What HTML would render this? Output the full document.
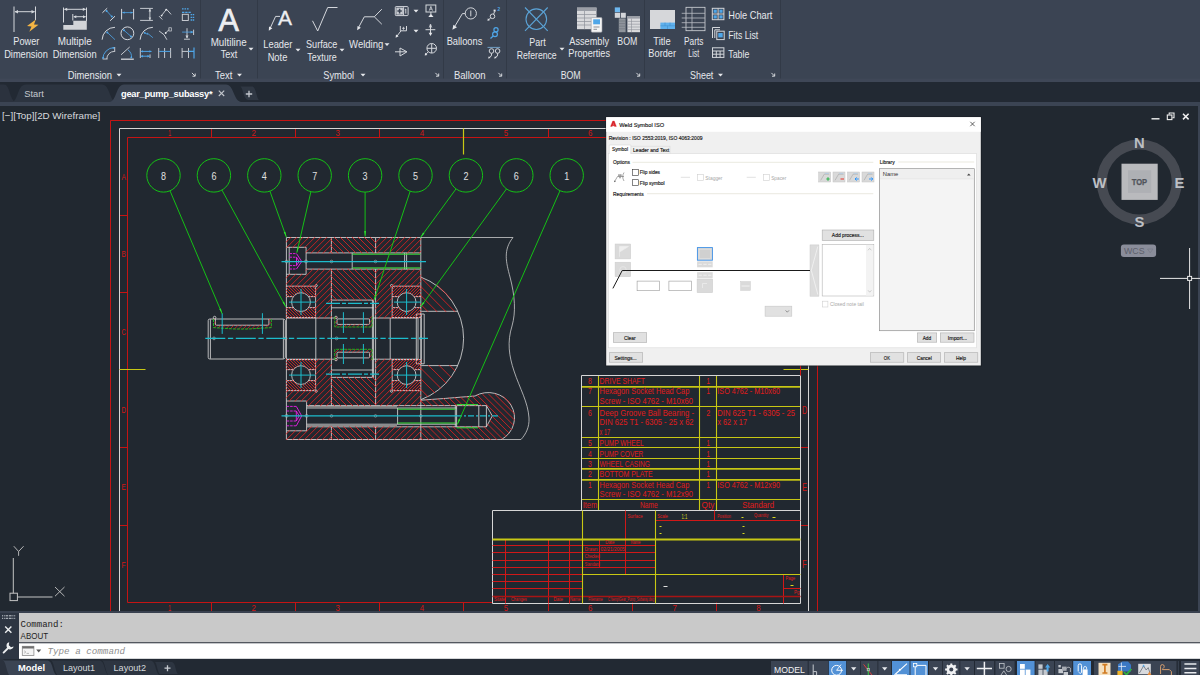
<!DOCTYPE html>
<html>
<head>
<meta charset="utf-8">
<title>gear_pump_subassy</title>
<style>
html,body{margin:0;padding:0;}
body{width:1200px;height:675px;overflow:hidden;background:#212830;font-family:"Liberation Sans",sans-serif;position:relative;}
.abs{position:absolute;}
#ribbon{position:absolute;left:0;top:0;width:1200px;height:82px;background:#3b4453;}
#tabstrip{position:absolute;left:0;top:82px;width:1200px;height:20px;background:#222933;}
#band{position:absolute;left:0;top:102px;width:1200px;height:4px;background:#3b4453;}
#draw{position:absolute;left:0;top:106px;width:1200px;height:505px;background:#212830;}
#cmd{position:absolute;left:0;top:611px;width:1200px;height:48px;background:#2b3340;}
#status{position:absolute;left:0;top:659px;width:1200px;height:16px;background:#222933;}
.rt{position:absolute;color:#e8eaed;font-size:10.5px;line-height:13px;text-align:center;white-space:nowrap;}
.pt{position:absolute;color:#e8eaed;font-size:10.5px;line-height:13px;top:68px;white-space:nowrap;}
.sep{position:absolute;top:0;width:1px;height:80px;background:#333b48;}
</style>
</head>
<body>
<div id="ribbon">
<svg class="abs" style="left:0;top:0" width="1200" height="82" viewBox="0 0 1200 82" font-family="Liberation Sans, sans-serif" font-size="9.7" fill="#e6e8ec">
<defs>
<path id="dd" d="M-2.5,-1.2 L2.5,-1.2 L0,1.6 Z" fill="#e6e8ec"/>
<g id="corner" stroke="#e4e6ea" stroke-width="0.9" fill="none"><path d="M-1.6,-1.6 L1.4,1.4 M-1,1.7 H1.7 V-1"/></g>
</defs>
<!-- separators -->
<g fill="#323a47"><rect x="200" y="0" width="1" height="80"/><rect x="257" y="0" width="1" height="80"/><rect x="443" y="0" width="1" height="80"/><rect x="506" y="0" width="1" height="80"/><rect x="644" y="0" width="1" height="80"/><rect x="780" y="0" width="1" height="80"/></g>
<rect x="0" y="78.5" width="1200" height="3.5" fill="#3f4757"/>
<g text-anchor="middle" font-size="10.6">
<text x="26.3" y="45.1" textLength="26.0" lengthAdjust="spacingAndGlyphs">Power</text>
<text x="26.0" y="58" textLength="43.7" lengthAdjust="spacingAndGlyphs">Dimension</text>
<text x="74.7" y="45.1" textLength="34.0" lengthAdjust="spacingAndGlyphs">Multiple</text>
<text x="74.7" y="58" textLength="44.0" lengthAdjust="spacingAndGlyphs">Dimension</text>
<text x="89.8" y="78.9" textLength="44.3" lengthAdjust="spacingAndGlyphs">Dimension</text>
<text x="228.7" y="45.9" textLength="36.0" lengthAdjust="spacingAndGlyphs">Multiline</text>
<text x="229.0" y="58.3" textLength="16.7" lengthAdjust="spacingAndGlyphs">Text</text>
<text x="223.7" y="78.9" textLength="17.3" lengthAdjust="spacingAndGlyphs">Text</text>
<text x="277.8" y="48.1" textLength="29.0" lengthAdjust="spacingAndGlyphs">Leader</text>
<text x="277.5" y="60.7" textLength="19.7" lengthAdjust="spacingAndGlyphs">Note</text>
<text x="321.7" y="48.1" textLength="31.3" lengthAdjust="spacingAndGlyphs">Surface</text>
<text x="322.0" y="60.7" textLength="29.3" lengthAdjust="spacingAndGlyphs">Texture</text>
<text x="366.2" y="48.1" textLength="34.3" lengthAdjust="spacingAndGlyphs">Welding</text>
<text x="338.7" y="78.9" textLength="30.7" lengthAdjust="spacingAndGlyphs">Symbol</text>
<text x="464.5" y="45.0" textLength="35.7" lengthAdjust="spacingAndGlyphs">Balloons</text>
<text x="469.8" y="78.9" textLength="31.7" lengthAdjust="spacingAndGlyphs">Balloon</text>
<text x="537.5" y="46.0" textLength="16.3" lengthAdjust="spacingAndGlyphs">Part</text>
<text x="536.7" y="58.5" textLength="40.0" lengthAdjust="spacingAndGlyphs">Reference</text>
<text x="589.2" y="44.8" textLength="39.7" lengthAdjust="spacingAndGlyphs">Assembly</text>
<text x="589.2" y="57.4" textLength="41.7" lengthAdjust="spacingAndGlyphs">Properties</text>
<text x="627.3" y="44.8" textLength="20.0" lengthAdjust="spacingAndGlyphs">BOM</text>
<text x="570.7" y="78.9" textLength="20.0" lengthAdjust="spacingAndGlyphs">BOM</text>
<text x="662.0" y="44.6" textLength="17.3" lengthAdjust="spacingAndGlyphs">Title</text>
<text x="662.2" y="57.2" textLength="27.7" lengthAdjust="spacingAndGlyphs">Border</text>
<text x="693.7" y="44.6" textLength="19.3" lengthAdjust="spacingAndGlyphs">Parts</text>
<text x="693.7" y="57.2" textLength="10.7" lengthAdjust="spacingAndGlyphs">List</text>
<text x="701.7" y="78.9" textLength="23.3" lengthAdjust="spacingAndGlyphs">Sheet</text>
</g>
<g font-size="10.6">
<text x="728.3" y="19.3" textLength="44.0" lengthAdjust="spacingAndGlyphs">Hole Chart</text>
<text x="728.3" y="38.5" textLength="30.0" lengthAdjust="spacingAndGlyphs">Fits List</text>
<text x="728.3" y="57.7" textLength="21.0" lengthAdjust="spacingAndGlyphs">Table</text>
</g>
<!-- dropdown arrows -->
<use href="#dd" x="119" y="75"/><use href="#dd" x="239.5" y="75"/><use href="#dd" x="363" y="75"/><use href="#dd" x="720.5" y="75"/>
<use href="#dd" x="251" y="49"/><use href="#dd" x="298" y="50"/><use href="#dd" x="342" y="50"/><use href="#dd" x="387" y="44.5" transform="scale(1)"/><use href="#dd" x="562" y="49"/>
<use href="#dd" x="416" y="11"/><use href="#dd" x="416" y="31"/>
<!-- corner launchers -->
<use href="#corner" x="193.5" y="74.5"/><use href="#corner" x="437" y="74.5"/><use href="#corner" x="500" y="74.5"/><use href="#corner" x="638" y="74.5"/><use href="#corner" x="773" y="74.5"/>
<defs>
<marker id="ah" viewBox="0 0 6 6" refX="5.5" refY="3" markerWidth="4" markerHeight="4" orient="auto-start-reverse"><path d="M0,0.5 L6,3 L0,5.5 Z" fill="context-stroke"/></marker>
</defs>
<g fill="none" stroke="#d4d7dc" stroke-width="1" stroke-linecap="butt">
<!-- Power Dimension -->
<path d="M14,6.5 V32 M35.5,6.5 V20"/>
<path d="M15,11.7 H34.5"/><path d="M14.5,11.7 l3.5,-1.8 v3.6 Z M35,11.7 l-3.5,-1.8 v3.6 Z" fill="#d4d7dc" stroke="none"/>
<path d="M35.8,19.5 L27,26 L31.5,26.4 L29.3,31.8 L38.5,24.8 L34,24.5 Z" fill="#f4b544" stroke="none"/>
<!-- Multiple Dimension -->
<path d="M63.5,7.5 V22.5 M86.5,7.5 V21 M72.8,14 V20.5"/>
<path d="M64.5,9.3 H85.5 M74,16.7 H85.5"/>
<path d="M64,9.3 l3.2,-1.6 v3.2 Z M86,9.3 l-3.2,-1.6 v3.2 Z M73.3,16.7 l3,-1.5 v3 Z M86,16.7 l-3,-1.5 v3 Z" fill="#d4d7dc" stroke="none"/>
<path d="M63.3,25 H73.3 V20.8 H86.8 V29.8 H63.3 Z" fill="#d2d4d8" stroke="none"/>
<!-- small dim icons row1 -->
<path d="M102.4,12.8 L107.2,8.2 M110.1,20.8 L115,16.2"/>
<path d="M106.2,10.4 L112.2,17" stroke="#4fa6e8" stroke-width="0.8"/><circle cx="106.6" cy="10.9" r="1" fill="#4fa6e8" stroke="none"/><circle cx="111.8" cy="16.5" r="1" fill="#4fa6e8" stroke="none"/>
<path d="M121.6,8.9 V19.5 M133.6,8.9 V19.5"/>
<path d="M122.4,12.6 H132.8" stroke="#4fa6e8" stroke-width="0.8"/><path d="M122.2,12.6 l2.4,-1.2 v2.4 Z M133,12.6 l-2.4,-1.2 v2.4 Z" fill="#4fa6e8" stroke="none"/>
<path d="M140.1,8.4 H152.9 M140.1,20.4 H152.9 M149.9,9 V20" stroke-width="0.9"/>
<path d="M149.9,8.8 l-1.3,2.6 h2.6 Z M149.9,20 l-1.3,-2.6 h2.6 Z" fill="#d4d7dc" stroke="none"/>
<path d="M159.1,16.2 L162.3,19.5 M161.4,15.8 L166.5,9.2 L171.1,14.4" stroke-width="0.9"/><circle cx="161.6" cy="15.6" r="0.9" fill="#e6e8ec" stroke="none"/><circle cx="166.2" cy="9.7" r="0.9" fill="#e6e8ec" stroke="none"/>
<rect x="182.3" y="14.3" width="6" height="6.2" stroke-width="0.9"/>
<path d="M182,8.9 H188.6" stroke="#4fa6e8" stroke-width="1.3" stroke-dasharray="1.6,0.9"/><path d="M182,12.3 H191.4" stroke="#4fa6e8" stroke-width="1.3" stroke-dasharray="2.4,0.8"/>
<path d="M190.6,14.6 H194.2 M190.6,17.4 H194.2 M190.6,20 H194.2" stroke="#4fa6e8" stroke-width="1.4" stroke-dasharray="1.5,0.6"/>
<!-- row2 -->
<path d="M102.1,39.7 A12.9,12.9 0 0 1 115,27.3"/>
<path d="M115,39.7 L107.6,32.7" stroke="#4fa6e8" stroke-width="0.8"/><circle cx="107.3" cy="32.4" r="1" fill="#4fa6e8" stroke="none"/>
<circle cx="127.4" cy="33.3" r="6.4"/>
<path d="M123.7,30 L131.3,36.7" stroke="#4fa6e8" stroke-width="0.8"/><circle cx="124" cy="30.3" r="1" fill="#4fa6e8" stroke="none"/><circle cx="131" cy="36.4" r="1" fill="#4fa6e8" stroke="none"/>
<path d="M140.1,39.7 A12.9,12.9 0 0 1 152.9,27.3"/>
<path d="M144.6,32.8 L147.6,34.4 L147.2,33 L152.9,37.7" stroke="#4fa6e8" stroke-width="0.8"/><circle cx="144.8" cy="32.9" r="0.9" fill="#4fa6e8" stroke="none"/>
<path d="M159.1,31 Q165,34 166.9,39.7 M165.6,33.1 L169,29.6" stroke-width="0.9"/><circle cx="165.7" cy="33" r="0.9" fill="#e6e8ec" stroke="none"/><rect x="168.9" y="27.8" width="2.4" height="3.2" stroke-width="0.7"/>
<path d="M187,28.2 V38 M184,39.2 H189.9 M193.6,29.6 V35" stroke-width="0.9"/><path d="M187,38.4 l-1.5,-2.8 h3 Z" fill="#d4d7dc" stroke="none"/>
<path d="M182.1,32.1 H193" stroke="#4fa6e8" stroke-width="0.8"/><path d="M193.2,32.1 l-2.6,-1.3 v2.6 Z" fill="#4fa6e8" stroke="none"/>
<!-- row3 -->
<path d="M102.8,59 A11.5,11.5 0 0 1 114.3,47.6" stroke="#4fa6e8" stroke-width="0.9"/>
<path d="M106.8,59 A7.6,7.6 0 0 1 114.4,51.4" stroke-width="0.9"/>
<path d="M114.7,47 V52 M102.6,59 H107.6" stroke-width="0.9"/><circle cx="103.2" cy="57.6" r="0.9" fill="#4fa6e8" stroke="none"/><circle cx="113.4" cy="47.8" r="0.9" fill="#4fa6e8" stroke="none"/>
<path d="M121,59.2 H133.8" stroke-width="1.3"/><path d="M121,54.8 L129.7,47" stroke-width="0.9"/>
<path d="M127.9,49.8 A9,9 0 0 1 131.5,58" stroke="#4fa6e8" stroke-width="0.9"/><circle cx="131.3" cy="57.4" r="0.9" fill="#4fa6e8" stroke="none"/>
<path d="M140.3,48 V58 M150,54.4 V58" stroke-width="0.9"/><path d="M141,51.4 H151.4 M141,56.2 H149.4" stroke="#4fa6e8" stroke-width="1"/><path d="M151.8,51.4 l-2.4,-1.2 v2.4 Z M149.8,56.2 l-2.4,-1.2 v2.4 Z M140.6,51.4 l2.4,-1.2 v2.4 Z M140.6,56.2 l2.4,-1.2 v2.4 Z" fill="#4fa6e8" stroke="none"/>
<path d="M158.7,48 V58 M164.6,48 V58 M170.6,48 V58" stroke-width="0.9"/><path d="M159.2,51.4 H170.2" stroke="#4fa6e8" stroke-width="1"/>
<path d="M182.1,48 V58 M188.5,48 V58 M182.1,51.4 H188.5" stroke-width="0.9"/><path d="M194,47.6 V58.4 M188.5,51.4 H194" stroke="#4fa6e8" stroke-width="1.2"/>
</g>
<!-- Text panel big A -->
<text x="228.7" y="31.3" font-size="30.5" text-anchor="middle" fill="#eceef1" stroke="#eceef1" stroke-width="0.7">A</text>
<!-- Leader note -->
<text x="285" y="24.7" font-size="21" text-anchor="middle" fill="#eceef1" stroke="#eceef1" stroke-width="0.3">A</text>
<g fill="none" stroke="#d4d7dc" stroke-width="1">
<path d="M280,16.4 H275.6 L270,28.5"/><path d="M268.8,30.8 l0.2,-4.2 l3.4,1.6 Z" fill="#e6e8ec" stroke="none"/>
<!-- Surface texture -->
<path d="M312.5,20.8 L317.7,31 L327.7,7.5 H337.5"/>
<!-- Welding -->
<path d="M358.3,28 L364.3,16.8 H374.3 L381.8,9.2 M374.3,16.8 L381.8,24.2"/><path d="M357.2,30.3 l0.3,-4.4 l3.4,1.8 Z" fill="#e6e8ec" stroke="none"/>
<!-- symbol small icons -->
<rect x="395.3" y="6.6" width="12.8" height="9" rx="0.8"/><rect x="396.3" y="7.6" width="6.6" height="7" fill="#c9ccd2" stroke="none"/>
<path d="M397.4,11.1 H401.8 M399.6,8.8 V13.4" stroke="#3b4453" stroke-width="1.5"/><path d="M403.6,7.2 V15 M405.8,9 V13.6 M404.8,9.8 L405.8,9"/>
<path d="M396.8,36.3 L401,30.8 M400.3,30.8 H406.5 V26 M400.3,30.8 V26"/><path d="M395.6,37.8 l0.4,-3.4 l2.6,1.9 Z" fill="#e6e8ec" stroke="none"/>
<path d="M402,28.3 H405 M403.5,26.8 V29.8" stroke-width="0.8"/>
<path d="M395,51.8 H406 M400,48 L407,51.8 L400,56 Z"/>
<rect x="426" y="5" width="9.8" height="7"/><path d="M428.3,17 H433.5 L430.9,13.8 Z" fill="#e6e8ec" stroke="none"/><path d="M430.9,12 V14.5"/>
<path d="M429.3,10.6 L430.9,6.4 L432.5,10.6 M429.9,9.2 H431.9" stroke-width="0.8"/>
<path d="M425.5,29.7 H435.3 M430.5,25 V34"/><path d="M430.5,36 l-1.8,-3.2 h3.6 Z" fill="#e6e8ec" stroke="none"/>
<path d="M429.2,27.6 L430.5,24 L431.8,27.6" stroke-width="0.8"/>
<circle cx="431.7" cy="48.3" r="4.8"/><path d="M427,48.3 H436.4 M431.7,43.6 V53 M428.3,51.8 L425.6,54.6"/><path d="M424.7,55.6 l0.5,-2.8 l2.2,2.2 Z" fill="#e6e8ec" stroke="none"/>
<!-- Balloons -->
<circle cx="470.8" cy="13.4" r="5.6"/><path d="M470.8,10.5 V16.3"/>
<path d="M465.2,13.6 H462.4 L455,26"/><path d="M452.4,29.8 l1,-5 l3.6,2.4 Z" fill="#e6e8ec" stroke="none"/>
<circle cx="492.5" cy="16.3" r="2.3"/><path d="M490.8,17.8 L488.6,19.8 M493.6,14.2 L494.6,11.6"/><path d="M487.4,20.8 l0.5,-2.6 l2,2 Z" fill="#e6e8ec" stroke="none"/><rect x="493.6" y="9.6" width="2" height="2" fill="#e6e8ec" stroke="none"/>
</g>
<text x="497.6" y="11.4" font-size="4.8" font-weight="bold" fill="#4fa6e8">2</text>
<g fill="none" stroke="#4fa6e8" stroke-width="1.2">
<circle cx="496" cy="29.8" r="2.1"/><circle cx="495" cy="34.3" r="2.4"/><path d="M493.2,36 L490.5,38.5"/>
</g>
<g fill="none" stroke="#d4d7dc" stroke-width="1">
<circle cx="491.5" cy="51" r="2.3"/><circle cx="497.6" cy="51" r="2.3"/><path d="M491.5,53.3 V55 Q491.5,56.6 489.6,57.2 M497.6,53.3 V55 Q497.6,56.6 495.7,57.2"/><path d="M488,58.4 l0.9,-2.2 l1.6,1.8 Z M494.1,58.4 l0.9,-2.2 l1.6,1.8 Z" fill="#e6e8ec" stroke="none"/>
</g>
<path d="M487.5,47.4 H500.2" stroke="#7fb6e0" stroke-width="0.8"/>
<!-- Part reference -->
<g fill="none" stroke="#5ba3d6" stroke-width="1.1"><circle cx="536.3" cy="19.2" r="10.3"/><path d="M525,7.5 L547.7,30.8 M547.7,7.5 L525,30.8"/></g>

<!-- Assembly Properties -->
<rect x="577" y="7.6" width="19.5" height="21.6" fill="#d9dadd"/>
<rect x="577" y="7.6" width="19.5" height="3.4" fill="#9a9ea6"/>
<g stroke="#8d9199" stroke-width="0.7"><path d="M577,14.5 H596.5 M577,18 H596.5 M577,21.5 H596.5 M577,25 H596.5 M584.5,11 V29.2"/></g>
<rect x="591.2" y="17.6" width="10.8" height="14.6" rx="1" fill="#f4f4f4" stroke="#9a9ea6" stroke-width="0.6"/>
<rect x="593.2" y="19.3" width="6.8" height="5" fill="#4fa6e8"/>
<path d="M593.5,27 H599.5 M593.5,29.3 H597" stroke="#8d9199" stroke-width="1"/>
<!-- BOM -->
<rect x="614.8" y="7.4" width="5.2" height="4.8" fill="#6db7ee"/>
<rect x="614.8" y="12.8" width="5.2" height="5" fill="#d4d6da"/><rect x="620.8" y="12.8" width="5" height="5" fill="#d4d6da"/>
<rect x="618.8" y="18.4" width="6.8" height="13.8" fill="#8f949c"/>
<g stroke="#6d727b" stroke-width="0.6"><path d="M618.8,21 H625.6 M618.8,23.6 H625.6 M618.8,26.2 H625.6 M618.8,28.8 H625.6"/></g>
<rect x="627.4" y="16" width="12.6" height="16.2" fill="#d9dadd"/><rect x="627.4" y="16" width="12.6" height="2.6" fill="#9a9ea6"/>
<g stroke="#8d9199" stroke-width="0.6"><path d="M627.4,21.4 H640 M627.4,24.2 H640 M627.4,27 H640 M627.4,29.6 H640 M631.5,18.6 V32.2"/></g>
<!-- Title Border -->
<rect x="650" y="10" width="25" height="19" fill="#d6d7da"/>
<rect x="660.4" y="22.6" width="14.6" height="6.4" fill="#5fb0ec"/>
<g stroke="#3f8dcc" stroke-width="0.6"><path d="M660.4,25.8 H675 M665,22.6 V25.8 M670,22.6 V25.8 M667.5,25.8 V29"/></g>
<!-- Parts List -->
<g fill="none" stroke="#d4d7dc" stroke-width="1">
<rect x="686" y="7.3" width="19" height="23.4" stroke-width="0.8"/>
<path d="M692,7.3 V30.7 M681.7,13.3 H705 M681.7,18 H705 M681.7,22.7 H705 M681.7,27.3 H705" stroke-width="0.8" stroke="#b9bdc4"/>
<!-- Hole chart -->
<rect x="712.3" y="8.3" width="11.6" height="11.4"/><path d="M718.1,8.3 V19.7 M712.3,14 H723.9"/>
</g>
<g fill="#4fa6e8"><rect x="713.6" y="9.6" width="3.2" height="3.2"/><rect x="719.4" y="9.6" width="3.2" height="3.2"/><rect x="713.6" y="15.3" width="3.2" height="3.2"/><rect x="719.4" y="15.3" width="3.2" height="3.2"/></g>
<g fill="none" stroke="#d4d7dc" stroke-width="1">
<!-- Fits list -->
<path d="M712.5,38 V27.5 H720 M714.8,38 V29.8 H720"/>
<rect x="716.8" y="31.2" width="7.4" height="8.4" fill="#3b4453"/><rect x="718.3" y="33" width="4.4" height="4.4" fill="#4fa6e8" stroke="none"/>
<!-- Table -->
<rect x="712.5" y="47.8" width="11.4" height="9.6"/><path d="M712.5,51 H723.9 M712.5,54.2 H723.9 M716.3,51 V57.4 M720.1,51 V57.4"/>
</g>

</svg>

</div>
<div id="tabstrip">
<svg class="abs" style="left:0;top:0" width="1200" height="24" viewBox="0 82 1200 24" font-family="Liberation Sans, sans-serif">
<path d="M0,84.5 H4 C10,84.5 9,98 15,102 H0 Z" fill="#2b323e"/>
<path d="M12,102 C19,100 17,84.5 26,84.5 H102 C110,84.5 109,100 116,102 Z" fill="#2c3440"/>
<path d="M110,102 C117,100 116,84.5 124,84.5 H226 C234,84.5 233,100 241,102 Z" fill="#3b4453"/>
<path d="M240.5,86.5 H252 C256,86.5 256.5,98 259,100 H248 C243.5,99 243,88 240.5,86.5 Z" fill="#2f3743"/>
<text x="24.3" y="97.3" font-size="9.3" fill="#c4c8ce">Start</text>
<text x="121" y="97.3" font-size="9.3" font-weight="bold" fill="#ffffff" letter-spacing="-0.27">gear_pump_subassy*</text>
<path d="M218.8,90.6 L224.2,96 M224.2,90.6 L218.8,96" stroke="#c4c8ce" stroke-width="1.1" fill="none"/>
<path d="M245.8,94 H252.2 M249,90.8 V97.2" stroke="#c4c8ce" stroke-width="1.3" fill="none"/>
</svg>

</div>
<div id="band"></div>
<div id="draw">
<svg class="abs" style="left:0;top:0" width="1200" height="505" viewBox="0 106 1200 505" font-family="Liberation Sans, sans-serif">
<defs>
</defs>
<text x="2" y="119" font-size="9.8" fill="#d8dade">[−][Top][2D Wireframe]</text>
<!-- right border strip -->
<rect x="1198" y="106" width="2" height="505" fill="#3b4453"/>
<!-- sheet frame -->
<g fill="none" stroke="#c41414" stroke-width="1">
<path d="M110.5,611.5 V120.5 H817.5 V611.5"/>
<path d="M127.5,602.5 V137.5 H800.5 V375.5 M127.5,602.5 H492.5"/>
<path d="M211.5,128.5 V137.5 M295.5,128.5 V137.5 M379.5,128.5 V137.5 M548.5,128.5 V137.5 M632.5,128.5 V137.5 M716.5,128.5 V137.5"/>
<path d="M211.5,602.5 V611.5 M295.5,602.5 V611.5 M379.5,602.5 V611.5 M463.5,602.5 V611.5 M548.5,602.5 V611.5 M632.5,602.5 V611.5 M716.5,602.5 V611.5"/>
<path d="M119.5,215.5 H127.5 M119.5,292.5 H127.5 M119.5,447.5 H127.5 M119.5,525.5 H127.5"/>
<path d="M800.5,215.5 H808.5 M800.5,292.5 H808.5 M800.5,447.5 H808.5 M800.5,525.5 H808.5"/>
</g>
<path d="M119.5,611.5 V128.5 H808.5 V611.5" fill="none" stroke="#d6d6d6" stroke-width="1"/>
<g stroke="#c8c814" stroke-width="1.2" fill="none"><path d="M463.5,128.5 V154.5 M119.5,369.5 H145.5 M783.5,369.5 H808.5"/></g>
<g fill="#d01818" font-size="9.3" text-anchor="middle">
<text x="169.5" y="136.4" textLength="3.2" lengthAdjust="spacingAndGlyphs">1</text><text x="253.7" y="136.4" textLength="4.4" lengthAdjust="spacingAndGlyphs">2</text><text x="337.8" y="136.4" textLength="4.4" lengthAdjust="spacingAndGlyphs">3</text><text x="421.9" y="136.4" textLength="4.4" lengthAdjust="spacingAndGlyphs">4</text><text x="506" y="136.4" textLength="4.4" lengthAdjust="spacingAndGlyphs">5</text><text x="590.1" y="136.4" textLength="4.4" lengthAdjust="spacingAndGlyphs">6</text>
<text x="169.5" y="611.2" textLength="3.2" lengthAdjust="spacingAndGlyphs">1</text><text x="253.7" y="611.2" textLength="4.4" lengthAdjust="spacingAndGlyphs">2</text><text x="337.8" y="611.2" textLength="4.4" lengthAdjust="spacingAndGlyphs">3</text><text x="421.9" y="611.2" textLength="4.4" lengthAdjust="spacingAndGlyphs">4</text><text x="506" y="611.2" textLength="4.4" lengthAdjust="spacingAndGlyphs">5</text><text x="590.1" y="611.2" textLength="4.4" lengthAdjust="spacingAndGlyphs">6</text><text x="674.6" y="611.2" textLength="4.4" lengthAdjust="spacingAndGlyphs">7</text><text x="758.4" y="611.2" textLength="4.4" lengthAdjust="spacingAndGlyphs">8</text>
<text x="123.6" y="179.9" textLength="4.4" lengthAdjust="spacingAndGlyphs">A</text><text x="123.6" y="257.4" textLength="4.4" lengthAdjust="spacingAndGlyphs">B</text><text x="123.6" y="334.9" textLength="4.4" lengthAdjust="spacingAndGlyphs">C</text><text x="123.6" y="412.5" textLength="4.4" lengthAdjust="spacingAndGlyphs">D</text><text x="123.6" y="490.1" textLength="4.4" lengthAdjust="spacingAndGlyphs">E</text><text x="123.6" y="567.6" textLength="4.2" lengthAdjust="spacingAndGlyphs">F</text>
<text x="804.6" y="413.6" font-size="10.4" textLength="5.2" lengthAdjust="spacingAndGlyphs">D</text><text x="804.6" y="491" font-size="10.4" textLength="4.8" lengthAdjust="spacingAndGlyphs">E</text><text x="804.4" y="568" font-size="10.4" textLength="4.4" lengthAdjust="spacingAndGlyphs">F</text>
</g>
<!-- ===== main assembly drawing ===== -->
<defs>
<path id="L1" d="M81.2,441.0L286.2,236.0M87.2,441.0L292.2,236.0M93.2,441.0L298.2,236.0M99.2,441.0L304.2,236.0M105.2,441.0L310.2,236.0M111.2,441.0L316.2,236.0M117.2,441.0L322.2,236.0M123.2,441.0L328.2,236.0M129.2,441.0L334.2,236.0M135.2,441.0L340.2,236.0M141.2,441.0L346.2,236.0M147.2,441.0L352.2,236.0M153.2,441.0L358.2,236.0M159.2,441.0L364.2,236.0M165.2,441.0L370.2,236.0M171.2,441.0L376.2,236.0M177.2,441.0L382.2,236.0M183.2,441.0L388.2,236.0M189.2,441.0L394.2,236.0M195.2,441.0L400.2,236.0M201.2,441.0L406.2,236.0M207.2,441.0L412.2,236.0M213.2,441.0L418.2,236.0M219.2,441.0L424.2,236.0M225.2,441.0L430.2,236.0M231.2,441.0L436.2,236.0M237.2,441.0L442.2,236.0M243.2,441.0L448.2,236.0M249.2,441.0L454.2,236.0M255.2,441.0L460.2,236.0M261.2,441.0L466.2,236.0M267.2,441.0L472.2,236.0M273.2,441.0L478.2,236.0M279.2,441.0L484.2,236.0M285.2,441.0L490.2,236.0M291.2,441.0L496.2,236.0M297.2,441.0L502.2,236.0M303.2,441.0L508.2,236.0M309.2,441.0L514.2,236.0M315.2,441.0L520.2,236.0M321.2,441.0L526.2,236.0M327.2,441.0L532.2,236.0M333.2,441.0L538.2,236.0M339.2,441.0L544.2,236.0M345.2,441.0L550.2,236.0M351.2,441.0L556.2,236.0M357.2,441.0L562.2,236.0M363.2,441.0L568.2,236.0M369.2,441.0L574.2,236.0M375.2,441.0L580.2,236.0M381.2,441.0L586.2,236.0M387.2,441.0L592.2,236.0M393.2,441.0L598.2,236.0M399.2,441.0L604.2,236.0M405.2,441.0L610.2,236.0M411.2,441.0L616.2,236.0M417.2,441.0L622.2,236.0"/>
<path id="L2" d="M129.0,236.0L334.0,441.0M135.0,236.0L340.0,441.0M141.0,236.0L346.0,441.0M147.0,236.0L352.0,441.0M153.0,236.0L358.0,441.0M159.0,236.0L364.0,441.0M165.0,236.0L370.0,441.0M171.0,236.0L376.0,441.0M177.0,236.0L382.0,441.0M183.0,236.0L388.0,441.0M189.0,236.0L394.0,441.0M195.0,236.0L400.0,441.0M201.0,236.0L406.0,441.0M207.0,236.0L412.0,441.0M213.0,236.0L418.0,441.0M219.0,236.0L424.0,441.0M225.0,236.0L430.0,441.0M231.0,236.0L436.0,441.0M237.0,236.0L442.0,441.0M243.0,236.0L448.0,441.0M249.0,236.0L454.0,441.0M255.0,236.0L460.0,441.0M261.0,236.0L466.0,441.0M267.0,236.0L472.0,441.0M273.0,236.0L478.0,441.0M279.0,236.0L484.0,441.0M285.0,236.0L490.0,441.0M291.0,236.0L496.0,441.0M297.0,236.0L502.0,441.0M303.0,236.0L508.0,441.0M309.0,236.0L514.0,441.0M315.0,236.0L520.0,441.0M321.0,236.0L526.0,441.0M327.0,236.0L532.0,441.0M333.0,236.0L538.0,441.0M339.0,236.0L544.0,441.0M345.0,236.0L550.0,441.0M351.0,236.0L556.0,441.0M357.0,236.0L562.0,441.0M363.0,236.0L568.0,441.0M369.0,236.0L574.0,441.0M375.0,236.0L580.0,441.0"/>
<path id="L3" d="M179.0,285.0L286.0,392.0M182.0,285.0L289.0,392.0M185.0,285.0L292.0,392.0M188.0,285.0L295.0,392.0M191.0,285.0L298.0,392.0M194.0,285.0L301.0,392.0M197.0,285.0L304.0,392.0M200.0,285.0L307.0,392.0M203.0,285.0L310.0,392.0M206.0,285.0L313.0,392.0M209.0,285.0L316.0,392.0M212.0,285.0L319.0,392.0M215.0,285.0L322.0,392.0M218.0,285.0L325.0,392.0M221.0,285.0L328.0,392.0M224.0,285.0L331.0,392.0M227.0,285.0L334.0,392.0M230.0,285.0L337.0,392.0M233.0,285.0L340.0,392.0M236.0,285.0L343.0,392.0M239.0,285.0L346.0,392.0M242.0,285.0L349.0,392.0M245.0,285.0L352.0,392.0M248.0,285.0L355.0,392.0M251.0,285.0L358.0,392.0M254.0,285.0L361.0,392.0M257.0,285.0L364.0,392.0M260.0,285.0L367.0,392.0M263.0,285.0L370.0,392.0M266.0,285.0L373.0,392.0M269.0,285.0L376.0,392.0M272.0,285.0L379.0,392.0M275.0,285.0L382.0,392.0M278.0,285.0L385.0,392.0M281.0,285.0L388.0,392.0M284.0,285.0L391.0,392.0M287.0,285.0L394.0,392.0M290.0,285.0L397.0,392.0M293.0,285.0L400.0,392.0M296.0,285.0L403.0,392.0M299.0,285.0L406.0,392.0M302.0,285.0L409.0,392.0M305.0,285.0L412.0,392.0M308.0,285.0L415.0,392.0M311.0,285.0L418.0,392.0M314.0,285.0L421.0,392.0M317.0,285.0L424.0,392.0M320.0,285.0L427.0,392.0M323.0,285.0L430.0,392.0M326.0,285.0L433.0,392.0M329.0,285.0L436.0,392.0M332.0,285.0L439.0,392.0M335.0,285.0L442.0,392.0M338.0,285.0L445.0,392.0M341.0,285.0L448.0,392.0M344.0,285.0L451.0,392.0M347.0,285.0L454.0,392.0M350.0,285.0L457.0,392.0M353.0,285.0L460.0,392.0M356.0,285.0L463.0,392.0M359.0,285.0L466.0,392.0M362.0,285.0L469.0,392.0M365.0,285.0L472.0,392.0M368.0,285.0L475.0,392.0M371.0,285.0L478.0,392.0M374.0,285.0L481.0,392.0M377.0,285.0L484.0,392.0M380.0,285.0L487.0,392.0M383.0,285.0L490.0,392.0M386.0,285.0L493.0,392.0M389.0,285.0L496.0,392.0M392.0,285.0L499.0,392.0M395.0,285.0L502.0,392.0M398.0,285.0L505.0,392.0M401.0,285.0L508.0,392.0M404.0,285.0L511.0,392.0M407.0,285.0L514.0,392.0M410.0,285.0L517.0,392.0M413.0,285.0L520.0,392.0M416.0,285.0L523.0,392.0M419.0,285.0L526.0,392.0"/>
<path id="L5" d="M391.3,275.0L428.3,312.0M400.3,275.0L437.3,312.0M409.3,275.0L446.3,312.0M418.3,275.0L455.3,312.0M427.3,275.0L464.3,312.0M436.3,275.0L473.3,312.0M445.3,275.0L482.3,312.0M454.3,275.0L491.3,312.0M463.3,275.0L500.3,312.0"/>
<path id="L7" d="M384.7,364.0L422.7,402.0M395.3,364.0L433.3,402.0M405.9,364.0L443.9,402.0M416.5,364.0L454.5,402.0M427.1,364.0L465.1,402.0M437.7,364.0L475.7,402.0M448.3,364.0L486.3,402.0M458.9,364.0L496.9,402.0"/>
<path id="L6" d="M376.9,394.0L423.9,441.0M383.1,394.0L430.1,441.0M389.3,394.0L436.3,441.0M395.5,394.0L442.5,441.0M401.7,394.0L448.7,441.0M407.9,394.0L454.9,441.0M414.1,394.0L461.1,441.0M420.3,394.0L467.3,441.0M426.5,394.0L473.5,441.0M432.7,394.0L479.7,441.0M438.9,394.0L485.9,441.0M445.1,394.0L492.1,441.0M451.3,394.0L498.3,441.0M457.5,394.0L504.5,441.0M463.7,394.0L510.7,441.0M469.9,394.0L516.9,441.0M476.1,394.0L523.1,441.0M482.3,394.0L529.3,441.0M488.5,394.0L535.5,441.0M494.7,394.0L541.7,441.0M500.9,394.0L547.9,441.0M507.1,394.0L554.1,441.0"/>
<path id="L4" d="M167.9,361.0L213.9,315.0M172.2,361.0L218.2,315.0M176.5,361.0L222.5,315.0M180.8,361.0L226.8,315.0M185.1,361.0L231.1,315.0M189.4,361.0L235.4,315.0M193.7,361.0L239.7,315.0M198.0,361.0L244.0,315.0M202.3,361.0L248.3,315.0M206.6,361.0L252.6,315.0M210.9,361.0L256.9,315.0M215.2,361.0L261.2,315.0M219.5,361.0L265.5,315.0M223.8,361.0L269.8,315.0M228.1,361.0L274.1,315.0M232.4,361.0L278.4,315.0M236.7,361.0L282.7,315.0M241.0,361.0L287.0,315.0M245.3,361.0L291.3,315.0M249.6,361.0L295.6,315.0M253.9,361.0L299.9,315.0M258.2,361.0L304.2,315.0M262.5,361.0L308.5,315.0M266.8,361.0L312.8,315.0M271.1,361.0L317.1,315.0M275.4,361.0L321.4,315.0M279.7,361.0L325.7,315.0M284.0,361.0L330.0,315.0M288.3,361.0L334.3,315.0M292.6,361.0L338.6,315.0M296.9,361.0L342.9,315.0M301.2,361.0L347.2,315.0M305.5,361.0L351.5,315.0M309.8,361.0L355.8,315.0M314.1,361.0L360.1,315.0M318.4,361.0L364.4,315.0M322.7,361.0L368.7,315.0M327.0,361.0L373.0,315.0M331.3,361.0L377.3,315.0M335.6,361.0L381.6,315.0M339.9,361.0L385.9,315.0M344.2,361.0L390.2,315.0M348.5,361.0L394.5,315.0M352.8,361.0L398.8,315.0M357.1,361.0L403.1,315.0M361.4,361.0L407.4,315.0M365.7,361.0L411.7,315.0M370.0,361.0L416.0,315.0"/>
<path id="L3b" d="M284.0,392.0L391.0,285.0M287.0,392.0L394.0,285.0M290.0,392.0L397.0,285.0M293.0,392.0L400.0,285.0M296.0,392.0L403.0,285.0M299.0,392.0L406.0,285.0M302.0,392.0L409.0,285.0M305.0,392.0L412.0,285.0M308.0,392.0L415.0,285.0M311.0,392.0L418.0,285.0M314.0,392.0L421.0,285.0M317.0,392.0L424.0,285.0M320.0,392.0L427.0,285.0M323.0,392.0L430.0,285.0M326.0,392.0L433.0,285.0M329.0,392.0L436.0,285.0M332.0,392.0L439.0,285.0M335.0,392.0L442.0,285.0M338.0,392.0L445.0,285.0M341.0,392.0L448.0,285.0M344.0,392.0L451.0,285.0M347.0,392.0L454.0,285.0M350.0,392.0L457.0,285.0M353.0,392.0L460.0,285.0M356.0,392.0L463.0,285.0M359.0,392.0L466.0,285.0M362.0,392.0L469.0,285.0M365.0,392.0L472.0,285.0M368.0,392.0L475.0,285.0M371.0,392.0L478.0,285.0M374.0,392.0L481.0,285.0M377.0,392.0L484.0,285.0M380.0,392.0L487.0,285.0M383.0,392.0L490.0,285.0M386.0,392.0L493.0,285.0M389.0,392.0L496.0,285.0M392.0,392.0L499.0,285.0M395.0,392.0L502.0,285.0M398.0,392.0L505.0,285.0M401.0,392.0L508.0,285.0M404.0,392.0L511.0,285.0M407.0,392.0L514.0,285.0M410.0,392.0L517.0,285.0M413.0,392.0L520.0,285.0M416.0,392.0L523.0,285.0M419.0,392.0L526.0,285.0"/>
<mask id="cA"><path d="M286.4,237.5 H331.4 V252.9 H306.1 V247.3 H286.4 Z M286.4,274.3 H306.1 V269.1 H331.4 V318 H315.6 V286.2 H286.4 Z M286.4,390.6 H315.6 V359.2 H331.4 V405.6 H306.6 V401 H286.4 Z M286.4,430.8 H306.6 V426.8 H331.4 V439.5 H286.4 Z M375.6,237.5 H420.8 V252.9 H375.6 Z M375.6,269.1 H420.8 V286.2 H392.2 V318 H375.6 Z M375.6,359.2 H392.2 V390.6 H420.8 V405.6 H375.6 Z M375.6,426.8 H420.8 V439.5 H375.6 Z" fill="#fff" stroke="#fff" stroke-width="1.1"/></mask>
<mask id="cB"><path d="M331.4,237.5 H375.6 V252.9 H331.4 Z M331.4,269.1 H375.6 V300.1 H331.4 Z M331.4,377.4 H375.6 V405.6 H331.4 Z M331.4,426.8 H375.6 V439.5 H331.4 Z" fill="#fff" stroke="#fff" stroke-width="1.1"/></mask>
<mask id="mC" maskUnits="userSpaceOnUse" x="280" y="280" width="70" height="120"><path d="M286.4,286.2 H315.6 V296.6 H286.4 Z M286.4,307.6 H315.6 V317.6 H286.4 Z M286.4,359.6 H315.6 V369.6 H286.4 Z M286.4,380.6 H315.6 V390.6 H286.4 Z" fill="#fff" stroke="#fff" stroke-width="1.1"/><g fill="#000"><circle cx="301" cy="302.1" r="9.4"/><circle cx="301" cy="375.1" r="9.4"/></g></mask>
<mask id="mC2" maskUnits="userSpaceOnUse" x="385" y="280" width="45" height="120"><path d="M392.2,286.2 H420.8 V296.6 H392.2 Z M392.2,307.6 H420.8 V317.6 H392.2 Z M392.2,359.6 H420.8 V369.6 H392.2 Z M392.2,380.6 H420.8 V390.6 H392.2 Z" fill="#fff" stroke="#fff" stroke-width="1.1"/><g fill="#000"><circle cx="406.6" cy="302.1" r="9.4"/><circle cx="406.6" cy="375.1" r="9.4"/></g></mask>
<mask id="cD"><path d="M420.8,277.1 A65.3,65.3 0 0 1 457.7,311.3 H420.8 Z" fill="#fff" stroke="#fff" stroke-width="1.1"/></mask>
<mask id="cD2"><path d="M420.8,365.6 H457.7 A65.3,65.3 0 0 1 420.8,399.7 Z" fill="#fff" stroke="#fff" stroke-width="1.1"/></mask>
<mask id="cF"><path d="M420.8,400.2 L445.6,398.4 L475,396 A24,23 0 0 1 501.5,439.5 H420.8 V426.8 H486.4 L492.3,415.9 L486.4,405.6 H420.8 Z" fill="#fff" stroke="#fff" stroke-width="1.1"/></mask>
<mask id="cE"><path d="M213.5,319 H215.4 V325.2 H268.9 V319 H271.3 V327.6 L248.2,329 H234.7 L213.5,327.6 Z M334.8,316.7 H337 V324.4 H369.6 V316.7 H372.1 V327 H334.8 Z M334.8,360 H337 V352.2 H369.6 V360 H372.1 V349.3 H334.8 Z" fill="#fff" stroke="#fff" stroke-width="0.6"/></mask>
</defs>
<g fill="none" stroke="#d6d6d6" stroke-width="0.85">
<circle cx="301" cy="302.1" r="9.4"/><circle cx="406.6" cy="302.1" r="9.4"/><circle cx="301" cy="375.1" r="9.4"/><circle cx="406.6" cy="375.1" r="9.4"/>
<!-- housing outline -->
<path d="M286.4,237.5 H420.8 V439.5 H286.4 Z"/>
<path d="M331.4,237.5 V252.9 M331.4,269.1 V300.1 M331.4,377.4 V405.6 M331.4,426.8 V439.5 M375.6,237.5 V252.9 M375.6,269.1 V318 M375.6,359.2 V405.6 M375.6,426.8 V439.5"/>
<!-- bearings outline -->
<path d="M286.4,286.2 H314 L315.6,287.8 V317.6 H286.4 M286.4,296.6 H293.2 M308.8,296.6 H315.6 M286.4,307.6 H293.2 M308.8,307.6 H315.6"/>
<path d="M420.8,286.2 H393.8 L392.2,287.8 V317.6 H420.8 M392.2,296.6 H398.8 M414.4,296.6 H420.8 M392.2,307.6 H398.8 M414.4,307.6 H420.8"/>
<path d="M286.4,390.6 H314 L315.6,389 V359.6 H286.4 M286.4,369.6 H293.2 M308.8,369.6 H315.6 M286.4,380.6 H293.2 M308.8,380.6 H315.6"/>
<path d="M420.8,390.6 H393.8 L392.2,389 V359.6 H420.8 M392.2,369.6 H398.8 M414.4,369.6 H420.8 M392.2,380.6 H398.8 M414.4,380.6 H420.8"/>
<circle cx="316.2" cy="285.6" r="1.1"/><circle cx="391.6" cy="285.6" r="1.1"/><circle cx="316.2" cy="391.2" r="1.1"/><circle cx="391.6" cy="391.2" r="1.1"/>
<!-- shaft -->
<path d="M209.8,319 H283.8 L285.3,320.5 V357.5 L283.8,359 H209.8 Q208.2,359 208.2,357.4 V320.6 Q208.2,319 209.8,319 Z M210.4,319.3 V358.7 M283.4,319.3 V358.7"/>
<path d="M286.4,318 H331.4 M286.4,359.2 H331.4 M315.8,318 V359.2 M331.4,300.1 V377.4"/>
<path d="M331.4,318 H334.8 M372.1,318 H390.2 M331.4,359.2 H334.8 M372.1,359.2 H390.2 M390.2,318 V359.2 M375.6,318 V359.2"/>
<path d="M390.2,318 H418 V359.2 H390.2 M416.3,314 H424.2 V363.8 H416.3 Z M421.3,314 V363.8"/>
<!-- gear -->
<path d="M331.4,300.1 H373.6 V377.4 H331.4 M331.4,307.8 H373.6 M331.4,370 H373.6 M372.4,300.1 V377.4"/>
<!-- keys outline -->
<path d="M215.4,319 V324.2 Q215.4,325.2 216.4,325.2 H267.9 Q268.9,325.2 268.9,324.2 V319"/>
<rect x="337" y="318.9" width="32.6" height="5.5" rx="1"/><rect x="337" y="352.2" width="32.6" height="5.7" rx="1"/>
<circle cx="214.6" cy="317.6" r="1.3"/><circle cx="336" cy="317.4" r="1.2"/><circle cx="336" cy="359.6" r="1.2"/>
<!-- top screw -->
<path d="M286.4,247.3 H306.1 V274.3 H286.4 M289.2,247.3 V274.3 M306.1,252.9 H420.8 M306.1,269.1 H420.8 M352.2,252.9 V269.1 M404.6,252.9 V269.1 M406.6,252.9 V269.1"/>
<!-- bottom screw -->
<path d="M286.4,401 H306.6 V430.8 H286.4 M306.6,405.6 H486.4 L492.3,415.9 L486.4,426.8 H306.6 M306.6,408 H456.6 M306.6,424.2 H456.6 M397.6,408 V424.2 M455.3,405.6 V426.8 M456.6,405.6 V426.8 M478.8,405.6 V426.8 M486.4,405.6 V426.8" />
<!-- right outline -->
<path d="M420.8,237.5 H513 C503,250 506,262 510,277 C515,296 516,312 512,326 C507,342 509,356 514,371 C520,389 528,402 529,418 C529.5,427 526,434 521,439.5 H420.8" stroke-width="0.75"/>
<path d="M420.8,277.1 A65.3,65.3 0 0 1 420.8,399.7 M420.8,311.3 H457.7 M420.8,365.6 H457.7"/>
<path d="M420.8,400.2 L445.6,398.4 L475,396 A24,23 0 0 1 501.5,439.5"/>
</g>
<g fill="none" stroke="#f02020" stroke-width="0.8">
<g mask="url(#cA)"><use href="#L1"/></g>
<g mask="url(#cB)"><use href="#L2"/></g>
<g mask="url(#mC)" stroke-width="0.75"><use href="#L3"/></g>
<g mask="url(#mC2)" stroke-width="0.75"><use href="#L3b"/></g>
<g mask="url(#cD)"><use href="#L5"/></g>
<g mask="url(#cD2)"><use href="#L7"/></g>
<g mask="url(#cF)"><use href="#L6"/></g>
<g mask="url(#cE)" stroke-width="0.7"><use href="#L4"/></g>
</g>
<!-- grey band of clearance -->
<g fill="none" stroke="#8a8a8a" stroke-width="1.4"><path d="M307,406.8 H397 M307,425.5 H397"/></g>
<!-- small circles (centre marks) -->
<g fill="none" stroke="#b8b8b8" stroke-width="0.6">
<circle cx="214" cy="338.4" r="1.4"/><circle cx="285.6" cy="338.4" r="1.4"/><circle cx="336.6" cy="338.4" r="1.4"/><circle cx="420.8" cy="338.4" r="1.4"/>
<circle cx="331.5" cy="261.5" r="1.3"/><circle cx="375.5" cy="261.5" r="1.3"/><circle cx="306" cy="261.5" r="1.5"/><circle cx="286.6" cy="261.5" r="1.5"/>
<circle cx="331.5" cy="415.9" r="1.3"/><circle cx="375.5" cy="415.9" r="1.3"/><circle cx="306.6" cy="415.9" r="1.5"/><circle cx="420.8" cy="415.9" r="1.3"/><circle cx="286.6" cy="415.9" r="1.5"/>
</g>
<!-- green thread lines -->
<g fill="none" stroke="#38e038" stroke-width="1">
<path d="M352.2,254.2 H420.5 M352.2,267.9 H420.5"/>
<path d="M397.6,409.2 H455.3 M397.6,423 H455.3 M456.6,404.6 H478 M456.6,427.8 H478" />
<path d="M213.5,319 V327.6 L234.7,329 H248.2 L271.3,327.6 V319" stroke-width="0.9" stroke="#20c020" stroke-dasharray="3,1"/>
<path d="M334.8,316.7 V327 H372.1 V316.7 M334.8,360 V349.3 H372.1 V360" stroke-width="0.9" stroke="#20c020" stroke-dasharray="3,1"/>
</g>
<!-- magenta socket heads -->
<g fill="none" stroke="#e020e0" stroke-width="0.95">
<path d="M289.4,253.6 H296.5 M289.4,257.2 H296.5 M289.4,265.6 H296.5 M289.4,269 H296.5" stroke-dasharray="2.6,0.9"/>
<path d="M296.5,253.6 L301.7,261.5 L296.5,269 M296.5,257.2 L299.2,261.5 L296.5,265.6 V257.2"/>
<path d="M286.6,406.4 H296.3 M286.6,411 H296.3 M286.6,421 H296.3 M286.6,425.8 H296.3" stroke-dasharray="2.6,0.9"/>
<path d="M296.3,406.4 L301.7,415.9 L296.3,425.8 M296.3,411 L299.2,415.9 L296.3,421 V411"/>
</g>
<!-- cyan centre lines -->
<g fill="none" stroke="#1cbccc" stroke-width="1.25">
<path d="M205.3,338.4 H428" stroke-dasharray="20,2.6,5.3,2.6"/>
<path d="M281.5,261.5 H426"/>
<path d="M281.5,415.9 H456"/><path d="M456,415.9 H498" stroke-dasharray="6,2,2,2"/>
<path d="M326,303.3 H379" stroke-dasharray="14,2,4,2"/><path d="M326,374.1 H379" stroke-dasharray="14,2,4,2"/>
<path d="M222.2,313.2 V333.9 M262.4,313.2 V333.9 M343.4,312.2 V333 M363.4,312.2 V333 M343.4,344 V364 M363.4,344 V364" stroke-width="1"/>
<path d="M301,289 V315 M289,302.1 H315.6 M406.6,289 V315 M394,302.1 H420.8 M301,362 V388 M289,375.1 H315.6 M406.6,362 V388 M394,375.1 H420.8" stroke-width="1"/>
</g>
<!-- balloons -->
<g fill="none" stroke="#14c814" stroke-width="0.95">
<circle cx="163.5" cy="175.4" r="16.7"/><path d="M170.0,190.8 L222.2,313.8"/>
<circle cx="213.9" cy="175.4" r="16.7"/><path d="M221.9,190.0 L285.9,306.9"/>
<circle cx="264.3" cy="175.4" r="16.7"/><path d="M269.9,191.1 L286.4,237.2"/>
<circle cx="314.7" cy="175.4" r="16.7"/><path d="M310.9,191.7 L296.8,252.8"/>
<circle cx="365.1" cy="175.4" r="16.7"/><path d="M365.1,192.1 L365.1,236.5"/>
<circle cx="415.5" cy="175.4" r="16.7"/><path d="M410.2,191.2 L374.1,300.0"/>
<circle cx="465.9" cy="175.4" r="16.7"/><path d="M456.0,188.9 L420.5,237.5"/>
<circle cx="516.3" cy="175.4" r="16.7"/><path d="M506.5,188.9 L420.5,307.0"/>
<circle cx="566.7" cy="175.4" r="16.7"/><path d="M560.0,190.7 L457.3,424.5"/>
</g>
<path d="M222.2,313.8 L219.2,309.1 L220.9,308.4 Z M285.9,306.9 L282.5,302.5 L284.0,301.6 Z M286.4,237.2 L283.7,232.3 L285.4,231.7 Z M296.8,252.8 L297.2,247.2 L298.9,247.6 Z M365.1,236.5 L364.2,231.0 L366.0,231.0 Z M374.1,300.0 L375.0,294.5 L376.7,295.1 Z M420.5,237.5 L423.0,232.5 L424.5,233.6 Z M420.5,307.0 L423.0,302.0 L424.5,303.1 Z M457.3,424.5 L458.7,419.1 L460.3,419.8 Z" fill="#30e030" stroke="none"/>
<g fill="#e0e0e0" font-size="11.5" text-anchor="middle">
<text x="163.5" y="179.6" textLength="5" lengthAdjust="spacingAndGlyphs">8</text>
<text x="213.9" y="179.6" textLength="5" lengthAdjust="spacingAndGlyphs">6</text>
<text x="264.3" y="179.6" textLength="5" lengthAdjust="spacingAndGlyphs">4</text>
<text x="314.7" y="179.6" textLength="5" lengthAdjust="spacingAndGlyphs">7</text>
<text x="365.1" y="179.6" textLength="5" lengthAdjust="spacingAndGlyphs">3</text>
<text x="415.5" y="179.6" textLength="5" lengthAdjust="spacingAndGlyphs">5</text>
<text x="465.9" y="179.6" textLength="5" lengthAdjust="spacingAndGlyphs">2</text>
<text x="516.3" y="179.6" textLength="5" lengthAdjust="spacingAndGlyphs">6</text>
<text x="566.7" y="179.6" textLength="5" lengthAdjust="spacingAndGlyphs">1</text>
</g>
<!-- UCS icon -->
<g fill="none" stroke="#c4c4c4" stroke-width="1"><path d="M13.3,593.2 V558 M17.5,597 H52.5"/><rect x="10" y="593.2" width="7.4" height="7.4"/>
<path d="M13.8,546.2 L18.6,551.5 L23.6,546.2 M18.6,551.5 V555.8 M55,587 L64.5,596.2 M64.5,587 L55,596.2" stroke-width="0.9"/></g>
<!-- cursor -->
<g fill="none" stroke="#e8e8e8" stroke-width="1"><path d="M1160,278.4 H1200 M1189.6,248 V309"/><rect x="1187.6" y="276.4" width="4" height="4" fill="#212830"/></g>
<!-- window controls -->
<g fill="none" stroke="#f0f0f0" stroke-width="1.4"><path d="M1151.5,118.8 H1159.5"/><path d="M1183,113.8 L1188.6,119.4 M1188.6,113.8 L1183,119.4" stroke-width="1.5"/><rect x="1167.3" y="115" width="4.6" height="4.6" stroke-width="1.1"/><path d="M1169.2,114.6 V113 H1174 V117.8 H1172.4" stroke-width="1.1"/></g>
<!-- viewcube -->
<circle cx="1139.3" cy="182" r="37.5" fill="none" stroke="#464a52" stroke-width="10"/>
<rect x="1121.5" y="163.7" width="36.2" height="36.2" fill="#b9babd"/>
<rect x="1128" y="170.3" width="23.2" height="22.6" fill="#aeb0b4"/>
<text x="1139.4" y="185.3" font-size="8.8" font-weight="bold" text-anchor="middle" fill="#50535a" stroke="#50535a" stroke-width="0.25" textLength="15.4" lengthAdjust="spacingAndGlyphs">TOP</text>
<g font-size="14.8" font-weight="bold" text-anchor="middle" fill="#bcbfc4"><text x="1139.4" y="147.7">N</text><text x="1139.4" y="227.4">S</text><text x="1099.4" y="188.3">W</text><text x="1179.4" y="188.3">E</text></g>
<rect x="1120.9" y="244.6" width="35.2" height="12.4" rx="3" fill="#8a8d9a"/>
<text x="1124" y="254.2" font-size="8.8" fill="#5d606b">WCS</text>
<path d="M1147.5,249 H1153 L1150.2,252.8 Z" fill="none" stroke="#7a7d8a" stroke-width="0.8"/>
<!-- BOM table -->
<g fill="none" stroke="#c8c814" stroke-width="1.1">
<path d="M581.5,386.5 H800.5 M581.5,406.5 H800.5 M581.5,437.5 H800.5 M581.5,447.5 H800.5 M581.5,458.5 H800.5 M581.5,468.5 H800.5 M581.5,479.5 H800.5 M581.5,499.5 H800.5 M598.5,375.5 V510.5 M699.5,375.5 V510.5 M716.5,375.5 V510.5"/>
<path d="M581.5,387.5 H800.5 M581.5,469.5 H800.5 M581.5,480.5 H800.5" stroke-width="0.7"/>
</g>
<path d="M581.5,510.5 V375.5 H800.5 V603.5 H492.5 V510.5 H800.5" fill="none" stroke="#d6d6d6" stroke-width="1"/>
<g fill="#e01c1c" font-size="9.2">
<text x="590.0" y="383.9" textLength="3.8" lengthAdjust="spacingAndGlyphs" text-anchor="middle">8</text>
<text x="599.6" y="383.9" textLength="45.4" lengthAdjust="spacingAndGlyphs">DRIVE SHAFT</text>
<text x="708.2" y="383.9" textLength="3.4" lengthAdjust="spacingAndGlyphs" text-anchor="middle">1</text>
<text x="590.0" y="394.3" textLength="3.8" lengthAdjust="spacingAndGlyphs" text-anchor="middle">7</text>
<text x="599.6" y="394.3" textLength="89.7" lengthAdjust="spacingAndGlyphs">Hexagon Socket Head Cap</text>
<text x="599.6" y="404.0" textLength="93.3" lengthAdjust="spacingAndGlyphs">Screw - ISO 4762 - M10x60</text>
<text x="708.2" y="394.3" textLength="3.4" lengthAdjust="spacingAndGlyphs" text-anchor="middle">1</text>
<text x="717.3" y="394.3" textLength="62.7" lengthAdjust="spacingAndGlyphs">ISO 4762 - M10x60</text>
<text x="590.0" y="415.7" textLength="3.8" lengthAdjust="spacingAndGlyphs" text-anchor="middle">6</text>
<text x="599.6" y="415.7" textLength="94.4" lengthAdjust="spacingAndGlyphs">Deep Groove Ball Bearing -</text>
<text x="599.6" y="425.4" textLength="94.0" lengthAdjust="spacingAndGlyphs">DIN 625 T1 - 6305 - 25 x 62</text>
<text x="599.6" y="435.1" textLength="10.5" lengthAdjust="spacingAndGlyphs">x 17</text>
<text x="708.2" y="415.7" textLength="4.0" lengthAdjust="spacingAndGlyphs" text-anchor="middle">2</text>
<text x="717.3" y="415.7" textLength="77.6" lengthAdjust="spacingAndGlyphs">DIN 625 T1 - 6305 - 25</text>
<text x="717.3" y="425.4" textLength="29.7" lengthAdjust="spacingAndGlyphs">x 62 x 17</text>
<text x="590.0" y="446.1" textLength="3.8" lengthAdjust="spacingAndGlyphs" text-anchor="middle">5</text>
<text x="599.6" y="446.1" textLength="44.2" lengthAdjust="spacingAndGlyphs">PUMP WHEEL</text>
<text x="708.2" y="446.1" textLength="3.4" lengthAdjust="spacingAndGlyphs" text-anchor="middle">1</text>
<text x="590.0" y="456.6" textLength="3.8" lengthAdjust="spacingAndGlyphs" text-anchor="middle">4</text>
<text x="599.6" y="456.6" textLength="43.7" lengthAdjust="spacingAndGlyphs">PUMP COVER</text>
<text x="708.2" y="456.6" textLength="3.4" lengthAdjust="spacingAndGlyphs" text-anchor="middle">1</text>
<text x="590.0" y="466.8" textLength="3.8" lengthAdjust="spacingAndGlyphs" text-anchor="middle">3</text>
<text x="599.6" y="466.8" textLength="50.4" lengthAdjust="spacingAndGlyphs">WHEEL CASING</text>
<text x="708.2" y="466.8" textLength="3.4" lengthAdjust="spacingAndGlyphs" text-anchor="middle">1</text>
<text x="590.0" y="477.2" textLength="3.8" lengthAdjust="spacingAndGlyphs" text-anchor="middle">2</text>
<text x="599.6" y="477.2" textLength="53.1" lengthAdjust="spacingAndGlyphs">BOTTOM PLATE</text>
<text x="708.2" y="477.2" textLength="3.4" lengthAdjust="spacingAndGlyphs" text-anchor="middle">1</text>
<text x="590.0" y="487.7" textLength="3.8" lengthAdjust="spacingAndGlyphs" text-anchor="middle">1</text>
<text x="599.6" y="487.7" textLength="89.7" lengthAdjust="spacingAndGlyphs">Hexagon Socket Head Cap</text>
<text x="599.6" y="497.4" textLength="93.3" lengthAdjust="spacingAndGlyphs">Screw - ISO 4762 - M12x90</text>
<text x="708.2" y="487.7" textLength="3.4" lengthAdjust="spacingAndGlyphs" text-anchor="middle">1</text>
<text x="717.3" y="487.7" textLength="62.7" lengthAdjust="spacingAndGlyphs">ISO 4762 - M12x90</text>
<text x="582.7" y="508.3" textLength="14.4" lengthAdjust="spacingAndGlyphs">Item</text>
<text x="648.9" y="508.3" textLength="17.8" lengthAdjust="spacingAndGlyphs" text-anchor="middle">Name</text>
<text x="701.6" y="508.3" textLength="12.8" lengthAdjust="spacingAndGlyphs">Qty</text>
<text x="758.2" y="508.3" textLength="31.8" lengthAdjust="spacingAndGlyphs" text-anchor="middle">Standard</text>
</g>
<!-- title block -->
<g fill="none" stroke="#d01818" stroke-width="1">
<path d="M492.5,545.5 H582.5 M492.5,552.5 H582.5 M492.5,560.5 H582.5 M492.5,567.5 H582.5 M492.5,574.5 H582.5 M492.5,581.5 H582.5 M492.5,588.5 H582.5 M505.5,539.5 V603.5 M548.5,539.5 V603.5 M569.5,539.5 V603.5 M599.5,539.5 V567.5 M625.5,510.5 V574.5 M582.5,545.5 H655.5 M582.5,552.5 H655.5 M582.5,560.5 H655.5 M582.5,567.5 H655.5 M655.5,520.5 H800.5 M714.5,510.5 V520.5 M783.5,574.5 V603.5 M783.5,588.5 H800.5"/>
<path d="M492.5,596.5 H800.5" stroke="#a81414" stroke-width="1.6"/>
</g>
<g fill="none" stroke="#c8c814" stroke-width="1.1"><path d="M582.5,510.5 V603.5 M655.5,510.5 V603.5 M582.5,574.5 H800.5"/><path d="M492.5,539.5 H800.5" stroke-width="1.8"/></g>
<g fill="#e01c1c" font-size="5.6">
<text x="627.4" y="517.9" textLength="15.3" lengthAdjust="spacingAndGlyphs">Surface</text>
<text x="605.2" y="544.0" textLength="9.4" lengthAdjust="spacingAndGlyphs">Date</text>
<text x="630.8" y="544.0" textLength="9.8" lengthAdjust="spacingAndGlyphs">Name</text>
<text x="584.8" y="551.1" textLength="12.7" lengthAdjust="spacingAndGlyphs">Drawn</text>
<text x="600.6" y="551.1" textLength="24.2" lengthAdjust="spacingAndGlyphs">02/21/2005</text>
<text x="584.8" y="558.4" textLength="15.0" lengthAdjust="spacingAndGlyphs">Checked</text>
<text x="584.8" y="565.6" textLength="15.0" lengthAdjust="spacingAndGlyphs">Standard</text>
<text x="494.0" y="600.9" textLength="11.5" lengthAdjust="spacingAndGlyphs">State</text>
<text x="511.0" y="600.9" textLength="15.8" lengthAdjust="spacingAndGlyphs">Changes</text>
<text x="553.6" y="600.9" textLength="9.5" lengthAdjust="spacingAndGlyphs">Date</text>
<text x="570.0" y="600.9" textLength="10.5" lengthAdjust="spacingAndGlyphs">Name</text>
<text x="588.2" y="600.9" textLength="14.5" lengthAdjust="spacingAndGlyphs">Filename</text>
<text x="608.1" y="600.9" textLength="46.0" lengthAdjust="spacingAndGlyphs">C:\temp\Gear_Pump_Subassy.dwg</text>
<text x="657.2" y="518.4" textLength="10.7" lengthAdjust="spacingAndGlyphs">Scale</text>
<text x="717.3" y="518.4" textLength="13.6" lengthAdjust="spacingAndGlyphs">Position</text>
<text x="753.9" y="517.0" textLength="14.5" lengthAdjust="spacingAndGlyphs">Quantity</text>
<text x="785.4" y="579.7" textLength="9.7" lengthAdjust="spacingAndGlyphs">Page</text>
<text x="794.0" y="593.7" textLength="5.6" lengthAdjust="spacingAndGlyphs">Pg</text>
</g>
<g fill="#d8d820" font-size="7.5"><text x="681.5" y="519.0" textLength="6.0" lengthAdjust="spacingAndGlyphs">1:1</text></g>
<g stroke="#d8d820" stroke-width="1" fill="none"><path d="M741.5,517.5 H743.5 M772.5,517.5 H775.5 M659.5,526.5 H661.5 M659.5,533.5 H661.5 M742.5,526.5 H744.5 M742.5,533.5 H744.5 M790.5,585.5 H793.5"/></g>
<path d="M663.5,586.5 H667.5" stroke="#e0e0e0" stroke-width="1" fill="none"/>
<path d="M800.5,365.5 V375.5" stroke="#d01818" stroke-width="1" fill="none"/>


</svg>

</div>
<svg class="abs" style="left:600px;top:110px" width="390" height="262" viewBox="600 110 390 262" font-family="Liberation Sans, sans-serif" font-size="5.4" stroke-width="0.16">
<rect x="605.4" y="116.4" width="376.4" height="250.1" fill="#15191f" opacity="0.55"/>
<rect x="606.2" y="117.2" width="374.6" height="248.3" fill="#f0f0f0"/>
<rect x="606.2" y="117.2" width="374.6" height="14.6" fill="#ffffff"/>
<path d="M610.5,126.4 L612.7,121 H614.3 L616.4,126.4 H614.5 L613.4,123.2 L612.9,124.6 H613.7 L614.2,125.8 H612.4 L612.2,126.4 Z" fill="#d8232a" stroke="#d8232a" stroke-width="0.3"/>
<text x="619.2" y="126.6" textLength="45.0" lengthAdjust="spacingAndGlyphs" fill="#1a1a1a" stroke="#1a1a1a" font-size="5.9">Weld Symbol ISO</text>
<path d="M970.3,121.8 L974.7,126.2 M974.7,121.8 L970.3,126.2" stroke="#222" stroke-width="0.7" fill="none"/>
<text x="608.7" y="140.1" textLength="93.8" lengthAdjust="spacingAndGlyphs" fill="#1a1a1a" stroke="#1a1a1a" font-size="5.4">Revision : ISO 2553:2019, ISO 4063:2009</text>
<rect x="608.6" y="153.5" width="368.1" height="194.3" fill="#ffffff" stroke="#d9d9d9" stroke-width="0.6"/>
<rect x="630.8" y="146.2" width="39.2" height="7.3" fill="#f0f0f0" stroke="#d9d9d9" stroke-width="0.6"/>
<path d="M609.2,154 V145 H630.8 V154" fill="#ffffff" stroke="#d9d9d9" stroke-width="0.6"/>
<text x="612.0" y="150.9" textLength="16.0" lengthAdjust="spacingAndGlyphs" fill="#1a1a1a" stroke="#1a1a1a" font-size="5.4">Symbol</text>
<text x="633.0" y="151.9" textLength="36.2" lengthAdjust="spacingAndGlyphs" fill="#1a1a1a" stroke="#1a1a1a" font-size="5.4">Leader and Text</text>
<g stroke="#dcdacb" stroke-width="0.6" fill="none"><path d="M632.5,162.3 H873.3 M647,193.7 H873.3 M898.3,162 H974.2"/></g>
<text x="613.0" y="164.2" textLength="17.0" lengthAdjust="spacingAndGlyphs" fill="#1a1a1a" stroke="#1a1a1a" font-size="5.4">Options</text>
<text x="613.0" y="195.6" textLength="30.7" lengthAdjust="spacingAndGlyphs" fill="#1a1a1a" stroke="#1a1a1a" font-size="5.4">Requirements</text>
<text x="879.7" y="163.9" textLength="15.0" lengthAdjust="spacingAndGlyphs" fill="#1a1a1a" stroke="#1a1a1a" font-size="5.4">Library</text>
<g stroke="#707070" stroke-width="0.6" fill="none"><path d="M614.6,181.5 L617.5,176.5 H624 M624,172.5 C622.3,175.3 622.3,178.2 624,181 M619,174 V176.5 M620.8,174 V176.5 M618,175.2 H621.8 M619.2,176.5 L620,178.3 L620.8,176.5" /></g><path d="M614.2,182.2 l0.3,-1.8 l1.4,0.8 Z" fill="#404040"/>
<g fill="#ffffff" stroke="#333" stroke-width="0.6"><rect x="632.3" y="169.5" width="6" height="5.8"/><rect x="632.3" y="179.7" width="6" height="5.8"/></g>
<g fill="#ffffff" stroke="#cfcfcf" stroke-width="0.6"><rect x="697.6" y="174.6" width="6" height="5.8"/><rect x="763.4" y="174.6" width="6" height="5.8"/><rect x="822.3" y="301.2" width="5.6" height="5.8"/></g>
<text x="639.7" y="174.2" textLength="20.3" lengthAdjust="spacingAndGlyphs" fill="#1a1a1a" stroke="#1a1a1a" font-size="5.4">Flip sides</text>
<text x="639.7" y="184.7" textLength="25.0" lengthAdjust="spacingAndGlyphs" fill="#1a1a1a" stroke="#1a1a1a" font-size="5.4">Flip symbol</text>
<text x="705.3" y="179.7" textLength="17.2" lengthAdjust="spacingAndGlyphs" fill="#a8a8a8" font-size="5.4">Stagger</text>
<text x="771.2" y="179.7" textLength="15.1" lengthAdjust="spacingAndGlyphs" fill="#a8a8a8" font-size="5.4">Spacer</text>
<path d="M680.8,177.3 H690 M746.7,177.3 H755.8" stroke="#d4d4d4" stroke-width="0.7" fill="none"/>
<rect x="818.7" y="172" width="12" height="10" fill="#d9d9d9" stroke="#c4c4c4" stroke-width="0.5"/>
<path d="M820.7,180.3 L824.3,174.2 H829.2" stroke="#9a9a9a" stroke-width="0.5" fill="none"/><path d="M824.9,173.4 H828.9" stroke="#9cc8f0" stroke-width="0.5"/>
<rect x="833.0" y="172" width="12" height="10" fill="#d9d9d9" stroke="#c4c4c4" stroke-width="0.5"/>
<path d="M835.0,180.3 L838.6,174.2 H843.5" stroke="#9a9a9a" stroke-width="0.5" fill="none"/><path d="M839.2,173.4 H843.2" stroke="#9cc8f0" stroke-width="0.5"/>
<rect x="847.5" y="172" width="12" height="10" fill="#d9d9d9" stroke="#c4c4c4" stroke-width="0.5"/>
<path d="M849.5,180.3 L853.1,174.2 H858.0" stroke="#9a9a9a" stroke-width="0.5" fill="none"/><path d="M853.7,173.4 H857.7" stroke="#9cc8f0" stroke-width="0.5"/>
<rect x="862.0" y="172" width="12" height="10" fill="#d9d9d9" stroke="#c4c4c4" stroke-width="0.5"/>
<path d="M864.0,180.3 L867.6,174.2 H872.5" stroke="#9a9a9a" stroke-width="0.5" fill="none"/><path d="M868.2,173.4 H872.2" stroke="#9cc8f0" stroke-width="0.5"/>
<path d="M826.3,179 H829.7 M828,177.3 V180.7" stroke="#2bb24a" stroke-width="1.1" fill="none"/>
<path d="M840.5,179 H844" stroke="#e8413a" stroke-width="1.1" fill="none"/>
<path d="M858.8,179 H855 M856.6,177.4 L855,179 L856.6,180.6" stroke="#1e90ff" stroke-width="0.9" fill="none"/>
<path d="M869,179 H872.8 M871.2,177.4 L872.8,179 L871.2,180.6" stroke="#1e90ff" stroke-width="0.9" fill="none"/>
<rect x="879.5" y="168.7" width="94.8" height="162" fill="#f4f4f4" stroke="#8e8e8e" stroke-width="0.7"/>
<rect x="880" y="169.2" width="93.8" height="9.5" fill="#efefef"/><path d="M880,178.8 H973.8" stroke="#dcdcdc" stroke-width="0.5"/>
<text x="882.8" y="176.2" textLength="15.5" lengthAdjust="spacingAndGlyphs" fill="#333" font-size="5.6">Name</text>
<path d="M967,175.6 L968.8,173.4 L970.6,175.6 Z" fill="#444"/>
<rect x="822.2" y="230.0" width="51.6" height="10.4" fill="#e1e1e1" stroke="#adadad" stroke-width="0.6"/><text x="831.8" y="237.2" textLength="32.0" lengthAdjust="spacingAndGlyphs" fill="#1a1a1a" stroke="#1a1a1a" font-size="5.4">Add process...</text>
<rect x="613.3" y="332.7" width="33.4" height="9.7" fill="#e1e1e1" stroke="#adadad" stroke-width="0.6"/><text x="624.0" y="339.6" textLength="11.6" lengthAdjust="spacingAndGlyphs" fill="#1a1a1a" stroke="#1a1a1a" font-size="5.4">Clear</text>
<rect x="609.3" y="352.7" width="33.4" height="9.5" fill="#e1e1e1" stroke="#adadad" stroke-width="0.6"/><text x="614.4" y="359.5" textLength="22.3" lengthAdjust="spacingAndGlyphs" fill="#1a1a1a" stroke="#1a1a1a" font-size="5.4">Settings...</text>
<rect x="870.4" y="352.7" width="33.4" height="9.5" fill="#e1e1e1" stroke="#adadad" stroke-width="0.6"/><text x="883.8" y="359.5" textLength="6.2" lengthAdjust="spacingAndGlyphs" fill="#1a1a1a" stroke="#1a1a1a" font-size="5.4">OK</text>
<rect x="907.3" y="352.7" width="33.4" height="9.5" fill="#e1e1e1" stroke="#adadad" stroke-width="0.6"/><text x="916.7" y="359.5" textLength="15.1" lengthAdjust="spacingAndGlyphs" fill="#1a1a1a" stroke="#1a1a1a" font-size="5.4">Cancel</text>
<rect x="944.4" y="352.7" width="33.4" height="9.5" fill="#e1e1e1" stroke="#adadad" stroke-width="0.6"/><text x="956.0" y="359.5" textLength="10.0" lengthAdjust="spacingAndGlyphs" fill="#1a1a1a" stroke="#1a1a1a" font-size="5.4">Help</text>
<rect x="917.3" y="332.9" width="19.4" height="9.3" fill="#e1e1e1" stroke="#adadad" stroke-width="0.6"/><text x="922.7" y="339.6" textLength="8.4" lengthAdjust="spacingAndGlyphs" fill="#1a1a1a" stroke="#1a1a1a" font-size="5.4">Add</text>
<rect x="940.4" y="332.9" width="33.6" height="9.3" fill="#e1e1e1" stroke="#adadad" stroke-width="0.6"/><text x="947.8" y="339.6" textLength="19.3" lengthAdjust="spacingAndGlyphs" fill="#1a1a1a" stroke="#1a1a1a" font-size="5.4">Import...</text>
<rect x="822.2" y="244.4" width="51.6" height="51.6" fill="#ffffff" stroke="#b4b4b4" stroke-width="0.6"/>
<rect x="866" y="244.9" width="7.4" height="50.6" fill="#f3f3f3"/>
<path d="M868,250.3 L869.7,248.4 L871.4,250.3 M868,290.3 L869.7,292.2 L871.4,290.3" stroke="#b0b0b0" stroke-width="0.6" fill="none"/>
<text x="830.0" y="306.3" textLength="33.8" lengthAdjust="spacingAndGlyphs" fill="#a8a8a8" font-size="5.4">Closed note tail</text>
<rect x="810" y="244.9" width="8.9" height="51.3" fill="#dcdcdc" stroke="#cacaca" stroke-width="0.5"/><path d="M817.8,246.5 L811.3,270.3 L817.8,294.5" stroke="#f4f4f4" stroke-width="0.8" fill="none"/>
<rect x="615.1" y="244" width="15.6" height="14.9" fill="#dadada" stroke="#cccccc" stroke-width="0.5"/><path d="M619.5,256.8 V246.5 H628.5 L619.5,252" fill="#efefef" stroke="#efefef" stroke-width="0.6"/>
<rect x="615.1" y="262.2" width="15.6" height="14.5" fill="#dadada" stroke="#cccccc" stroke-width="0.5"/><circle cx="623" cy="269.8" r="3.2" fill="none" stroke="#e8e8e8" stroke-width="0.8"/>
<rect x="697.4" y="247.6" width="15" height="12.6" fill="#d9d9d9" stroke="#3a8ee6" stroke-width="0.9"/><rect x="699.2" y="249.4" width="11.4" height="9" fill="#d0d0d0" stroke="#e6e6e6" stroke-width="0.4"/>
<rect x="697.1" y="261.3" width="15.6" height="6" fill="#dadada"/><path d="M698.5,264.3 H711.3" stroke="#f4f4f4" stroke-width="0.8" stroke-dasharray="3.4,1.4"/>
<rect x="697.1" y="272.2" width="15.6" height="6" fill="#dadada"/><path d="M698.5,275.2 H711.3" stroke="#f4f4f4" stroke-width="0.8" stroke-dasharray="3.4,1.4"/>
<rect x="697.1" y="279" width="15.6" height="13.7" fill="#dadada" stroke="#cccccc" stroke-width="0.5"/><path d="M702.5,288 V283.5 H707" stroke="#ececec" stroke-width="0.8" fill="none"/>
<g fill="#ffffff" stroke="#9a9a9a" stroke-width="0.6"><rect x="637.1" y="281.1" width="22.5" height="9.6"/><rect x="668.9" y="281.1" width="22.4" height="9.6"/></g>
<rect x="740.7" y="281.6" width="9.7" height="8.8" fill="#dadada" stroke="#cccccc" stroke-width="0.5"/><path d="M741.5,286 H749.6" stroke="#f4f4f4" stroke-width="0.9"/>
<rect x="765.1" y="306.2" width="26.7" height="10" fill="#e1e1e1" stroke="#c6c6c6" stroke-width="0.6"/><path d="M785.6,310.4 L787.3,312.2 L789,310.4" stroke="#555" stroke-width="0.6" fill="none"/>
<path d="M612.9,288.4 L622.2,270.5 H810" stroke="#1a1a1a" stroke-width="1" fill="none" stroke-linejoin="miter"/>
</svg>
<div id="cmd">
<svg class="abs" style="left:0;top:0" width="1200" height="48" viewBox="0 611 1200 48" font-family="Liberation Sans, sans-serif">
<rect x="0" y="611" width="1200" height="2" fill="#39414f"/>
<rect x="0" y="613" width="19" height="46" fill="#2d3542"/>
<rect x="19" y="613" width="1181" height="29.3" fill="#c9c9c9"/>
<rect x="19" y="642.3" width="1181" height="1" fill="#50545c"/>
<rect x="19" y="643.3" width="1181" height="15.5" fill="#ffffff"/>
<g fill="#c8ccd2"><rect x="2" y="615.3" width="1" height="1"/><rect x="3.8" y="615.3" width="1" height="1"/><rect x="5.6" y="615.3" width="2.6" height="1"/><rect x="9" y="615.3" width="2.6" height="1"/><rect x="12.4" y="615.3" width="1" height="1"/><rect x="14.2" y="615.3" width="1" height="1"/>
<rect x="2" y="617.8" width="1" height="1"/><rect x="3.8" y="617.8" width="1" height="1"/><rect x="5.6" y="617.8" width="2.6" height="1"/><rect x="9" y="617.8" width="2.6" height="1"/><rect x="12.4" y="617.8" width="1" height="1"/><rect x="14.2" y="617.8" width="1" height="1"/></g>
<path d="M5.2,626.5 L11.4,632.7 M11.4,626.5 L5.2,632.7" stroke="#eceef0" stroke-width="1.4" fill="none"/>
<path d="M3.6,652.6 L9.2,647" stroke="#eceef0" stroke-width="1.9" stroke-linecap="round" fill="none"/>
<path d="M9.2,642.3 A3.6,3.6 0 1 0 13.6,646.6 L11,647.3 L8.8,645.2 Z" fill="#eceef0"/>
<text x="20.5" y="627" font-family="Liberation Mono, monospace" font-size="9" fill="#222222" textLength="43.4" lengthAdjust="spacingAndGlyphs">Command:</text>
<text x="20.6" y="638.5" font-size="8.8" fill="#222222" textLength="27.5" lengthAdjust="spacingAndGlyphs">ABOUT</text>
<rect x="22.3" y="646.3" width="11.6" height="9.2" fill="#f4f4f4" stroke="#8c8c8c" stroke-width="0.8"/><rect x="22.3" y="646.3" width="11.6" height="2.2" fill="#6e6e6e"/>
<path d="M24.2,650.8 L25.8,652 L24.2,653.2 M26.6,653.4 H29" stroke="#8c8c8c" stroke-width="0.6" fill="none"/>
<path d="M36.2,649.6 H41.2 L38.7,652.6 Z" fill="#555"/>
<text x="47.5" y="653.8" font-family="Liberation Mono, monospace" font-style="italic" font-size="9.2" fill="#8e8e8e" textLength="77.5" lengthAdjust="spacingAndGlyphs">Type a command</text>
</svg>

</div>
<div id="status">
<svg class="abs" style="left:0;top:0" width="1200" height="16" viewBox="0 659 1200 16" font-family="Liberation Sans, sans-serif">
<!-- layout tabs -->
<path d="M0,659 H3 C7,661 7,672 12,675 H0 Z" fill="#2b323e"/>
<path d="M9,675 C6,670 6,662 3,660.5 H48 C53,662 52,671 56,675 Z" fill="#3b4453"/>
<path d="M57,675 C54,670 54,662 51,660.5 H100 C105,662 104,671 108,675 Z" fill="#2d3541"/>
<path d="M108,675 C105,670 105,662 102,660.5 H151 C156,662 155,671 159,675 Z" fill="#2d3541"/>
<path d="M159.5,674 C157,670 157,664 155,662 H172 C176,663 175,671 178,674 Z" fill="#2d3541"/>
<text x="18" y="671.2" font-size="9.6" font-weight="bold" fill="#ffffff" textLength="27" lengthAdjust="spacingAndGlyphs">Model</text>
<text x="63" y="671.2" font-size="9.4" fill="#d4d7db" textLength="32" lengthAdjust="spacingAndGlyphs">Layout1</text>
<text x="113.5" y="671.2" font-size="9.4" fill="#d4d7db" textLength="32.5" lengthAdjust="spacingAndGlyphs">Layout2</text>
<path d="M164.5,668.2 H170.5 M167.5,665.2 V671.2" stroke="#c8ccd2" stroke-width="1.3" fill="none"/>
<!-- status buttons -->
<g fill="#3b4453">
<rect x="771" y="661" width="36.7" height="14"/><rect x="808.6" y="661" width="19.4" height="14"/><rect x="847" y="661" width="13.2" height="14"/><rect x="861" y="661" width="16.5" height="14"/><rect x="878.3" y="661" width="12.8" height="14"/><rect x="929" y="661" width="13.2" height="14"/><rect x="943" y="661" width="16.5" height="14"/><rect x="960.3" y="661" width="13.7" height="14"/><rect x="975" y="661" width="19.2" height="14"/><rect x="995.4" y="661" width="19.2" height="14"/><rect x="1035.5" y="661" width="18.6" height="14"/><rect x="1055" y="661" width="17.3" height="14"/><rect x="1094" y="661" width="82.5" height="14"/><rect x="1181" y="661" width="18.5" height="14"/>
</g>
<g fill="#5291d6">
<rect x="828.8" y="661" width="17.4" height="14"/><rect x="892" y="661" width="17.6" height="14"/><rect x="910.4" y="661" width="17.6" height="14"/><rect x="1017" y="661" width="17.6" height="14"/><rect x="1073.2" y="661" width="17.8" height="14"/>
</g>
<text x="774" y="673.3" font-size="9.8" fill="#f2f3f5" textLength="30.8" lengthAdjust="spacingAndGlyphs">MODEL</text>
<g fill="none" stroke="#c4c8ce" stroke-width="1">
<path d="M813.2,664.5 V675 M813.2,671.6 H816.6 V675"/>
<circle cx="836.6" cy="670.3" r="4.9" stroke="#ffffff"/><path d="M836.6,670.3 H843 M836.6,670.3 L841,664.6" stroke="#ffffff" stroke-width="0.9"/>
<path d="M863.6,664.4 L872,675" stroke="#d84040" stroke-width="1"/><path d="M868.3,663.5 V675" stroke="#38c048" stroke-width="1.1"/><rect x="867.2" y="668.6" width="2.2" height="2.2" stroke-width="0.7"/>
<path d="M894.5,675 L907,663.6 M896,674.8 H907" stroke="#ffffff" stroke-width="1.1"/><circle cx="899.8" cy="669.8" r="1" fill="#ffffff" stroke="none"/>
<path d="M915.2,675 V665.4 H926 V675" stroke="#ffffff" stroke-width="1"/><rect x="913.6" y="663.6" width="3.2" height="3.2" stroke="#ffffff" stroke-width="0.8" fill="#5291d6"/>
<path d="M976.8,668.6 H992 M984.4,661.8 V675" stroke="#f0f1f3" stroke-width="1.5"/>
<rect x="999.5" y="663.6" width="4.6" height="4.6" stroke-width="0.8"/><circle cx="1008.6" cy="669" r="2.6" stroke-width="0.8"/><path d="M1001,675 L1003.8,670.8 L1006.6,675" stroke-width="0.8"/>
</g>
<g fill="#e8eaee">
<path d="M851,667.3 H856.4 L853.7,670.4 Z"/><path d="M882,667.3 H887.4 L884.7,670.4 Z"/><path d="M932.8,667.3 H938.2 L935.5,670.4 Z"/><path d="M964.4,667.3 H969.8 L967.1,670.4 Z"/>
</g>
<!-- gear -->
<g transform="translate(951.3,669.6)"><circle r="3.6" fill="none" stroke="#f0f1f3" stroke-width="2.4"/><g stroke="#f0f1f3" stroke-width="2"><path d="M0,-6.2 V6.2 M-6.2,0 H6.2 M-4.4,-4.4 L4.4,4.4 M-4.4,4.4 L4.4,-4.4"/></g><circle r="2" fill="#3b4453"/></g>
<!-- workspace icons -->
<g fill="#ffffff"><rect x="1020" y="664" width="4.8" height="4.8"/><rect x="1020" y="669.6" width="4.8" height="5.4"/><rect x="1025.6" y="669.6" width="4.8" height="5.4"/></g>
<g fill="#c4c8ce"><rect x="1038.4" y="664.4" width="4.2" height="4.4"/><rect x="1038.4" y="669.6" width="4.2" height="5.4"/><rect x="1043.4" y="669.6" width="4.2" height="5.4"/></g>
<path d="M1047.6,664 L1050.2,667.4 H1048.6 V671.6 H1046.6 V667.4 H1045 Z" fill="#4fa6e8"/>
<g fill="#c4c8ce"><rect x="1058.4" y="665" width="2.4" height="2.4"/><rect x="1058.4" y="669" width="4.6" height="4.2"/><rect x="1062" y="666.6" width="4.6" height="4.2" fill="#a8acb4"/><rect x="1063.6" y="672" width="4.4" height="3"/></g>
<path d="M1066.6,668.5 A2,2 0 0 1 1070.4,669.8 V672" stroke="#c4c8ce" stroke-width="0.8" fill="none"/>
<g fill="none" stroke="#ffffff" stroke-width="1"><path d="M1078.2,671.5 V665.6 A1.7,1.7 0 0 1 1081.6,665.6 V672.4 A1.4,1.4 0 0 1 1079,672.4"/></g><rect x="1082.6" y="669.4" width="5" height="5.6" fill="#ffffff"/><path d="M1083.6,669.4 V668 A1.5,1.5 0 0 1 1086.6,668 V669.4" stroke="#ffffff" stroke-width="0.8" fill="none"/>
<rect x="1098.5" y="662.8" width="12" height="12.2" fill="#f4e0c0"/><path d="M1102.4,664.6 H1107.4 M1104.9,664.6 V673 M1102.4,673 H1107.4" stroke="#d07a20" stroke-width="1.7" fill="none"/>
<path d="M1118,664.2 L1122.4,661.6 H1128 L1131,664.8 V671.5 H1118 Z" fill="#3a78c4"/><path d="M1118.4,666.4 H1126 M1121.4,662.6 V671.5" stroke="#e8f0fa" stroke-width="0.8" fill="none"/><rect x="1117.4" y="670.8" width="5.2" height="4.2" fill="#f0b428"/><path d="M1124,672 L1126.4,674.6 L1131.4,669" stroke="#30b040" stroke-width="1.8" fill="none"/>
<rect x="1138.2" y="663.8" width="12.6" height="10.4" fill="#d8dade"/><path d="M1139.4,673 L1143.6,666 L1146.2,670 L1148.2,667.6 L1150,673" stroke="#6a7078" stroke-width="0.8" fill="none"/><path d="M1143.6,664.6 L1145,666.6 H1142.2 Z" fill="#4fa6e8"/><path d="M1147.4,675 L1149.4,671.4 L1151.4,675 Z" fill="#e88a38"/>
<path d="M1160.6,674 V666.4 A1.8,1.8 0 0 1 1164.2,666.4 C1164.2,668.6 1162.4,668 1162.4,669.6 H1169.4 L1171.4,671.6 V675" stroke="#d8a070" stroke-width="1" fill="none"/>
<path d="M1184.4,664 H1196.4 M1184.4,668.4 H1196.4 M1184.4,672.8 H1196.4" stroke="#e8eaee" stroke-width="1.5" fill="none"/>
<rect x="1177.8" y="661" width="1" height="14" fill="#3b4453"/>
</svg>

</div>
</body>
</html>
